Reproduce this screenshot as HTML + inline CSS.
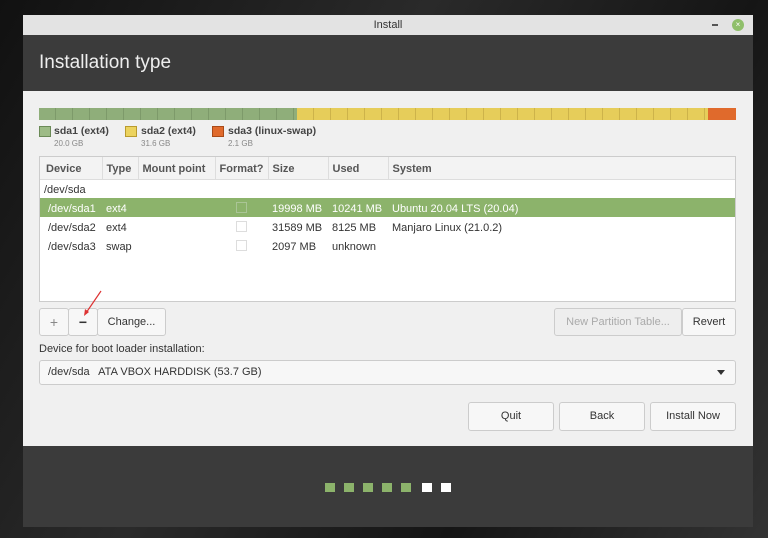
<!DOCTYPE html><html><head><style>
body{margin:0;width:768px;height:538px;overflow:hidden;background:#1c1c1c;font-family:"Liberation Sans",sans-serif;font-size:11px;color:#333;position:relative}
.a{position:absolute}
.btn{position:absolute;background:#f7f7f7;border:1px solid #ccc;border-radius:3px;text-align:center;box-sizing:border-box;color:#333}
table{table-layout:fixed}
td{padding:0 4px;height:19px;white-space:nowrap;overflow:hidden;box-sizing:border-box}
</style></head><body>
<div class="a" style="left:0;top:0;width:768px;height:538px;background:linear-gradient(120deg,#111 0%,#2a2a2a 40%,#151515 70%,#333 100%)"></div>
<div class="a" style="left:23px;top:15px;width:730px;height:512px;background:#f0f0f0">
 <div class="a" style="left:0;top:0;width:730px;height:20px;background:#e3e3e3;text-align:center;line-height:20px;font-size:11px;color:#333">Install</div>
 <div class="a" style="left:689px;top:9px;width:6px;height:2px;background:#555"></div>
 <div class="a" style="left:709px;top:4px;width:12px;height:12px;border-radius:50%;background:#8fbf6a;color:#fff;font-size:8px;line-height:12px;text-align:center">×</div>
 <div class="a" style="left:0;top:20px;width:730px;height:56px;background:#3b3b3b"></div>
 <div class="a" style="left:16px;top:37px;color:#eee;font-size:19px">Installation type</div>
 <div class="a" style="left:16px;top:93px;width:258px;height:12px;background:repeating-linear-gradient(90deg,#8fae7a 0 16px,#7d9a6a 16px 17px)"></div>
 <div class="a" style="left:274px;top:93px;width:411px;height:12px;background:repeating-linear-gradient(90deg,#e6cd5a 0 16px,#cdb34a 16px 17px)"></div>
 <div class="a" style="left:685px;top:93px;width:28px;height:12px;background:#e06a2c"></div>
 <div class="a" style="left:16px;top:111px;width:10px;height:9px;background:#9dbb86;border:1px solid #6b8a57"></div>
 <div class="a" style="left:31px;top:110px;font-weight:bold;color:#444;font-size:10.5px">sda1 (ext4)</div>
 <div class="a" style="left:31px;top:124px;color:#888;font-size:8px">20.0 GB</div>
 <div class="a" style="left:102px;top:111px;width:10px;height:9px;background:#ecd35e;border:1px solid #b99b2e"></div>
 <div class="a" style="left:118px;top:110px;font-weight:bold;color:#444;font-size:10.5px">sda2 (ext4)</div>
 <div class="a" style="left:118px;top:124px;color:#888;font-size:8px">31.6 GB</div>
 <div class="a" style="left:189px;top:111px;width:10px;height:9px;background:#e06a2c;border:1px solid #a94a18"></div>
 <div class="a" style="left:205px;top:110px;font-weight:bold;color:#444;font-size:10.5px">sda3 (linux-swap)</div>
 <div class="a" style="left:205px;top:124px;color:#888;font-size:8px">2.1 GB</div>
 <div class="a" style="left:16px;top:141px;width:697px;height:146px;background:#fff;border:1px solid #ccc;box-sizing:border-box"></div>
 <div class="a" style="left:17px;top:142px;width:695px;height:22px;background:#f3f3f3;border-bottom:1px solid #ddd"></div>
 <div class="a" style="left:17px;top:183px;width:695px;height:19px;background:#8cb36b"></div>
 <table class="a" style="left:17px;top:142px;width:695px;border-collapse:collapse;font-size:11px">
 <colgroup><col style="width:62px"><col style="width:36px"><col style="width:77px"><col style="width:53px"><col style="width:60px"><col style="width:60px"><col></colgroup>
 <tr style="height:23px;font-weight:bold;color:#555"><td style="padding-left:6px;border-right:1px solid #ddd">Device</td><td style="border-right:1px solid #ddd">Type</td><td style="border-right:1px solid #ddd">Mount point</td><td style="border-right:1px solid #ddd">Format?</td><td style="border-right:1px solid #ddd">Size</td><td style="border-right:1px solid #ddd">Used</td><td>System</td></tr>
 <tr><td style="padding-left:4px">/dev/sda</td><td></td><td></td><td></td><td></td><td></td><td></td></tr>
 <tr style="color:#fff"><td style="padding-left:8px">/dev/sda1</td><td>ext4</td><td></td><td style="text-align:center"><span style="display:inline-block;width:9px;height:9px;border:1px solid #aac596"></span></td><td>19998 MB</td><td>10241 MB</td><td>Ubuntu 20.04 LTS (20.04)</td></tr>
 <tr><td style="padding-left:8px">/dev/sda2</td><td>ext4</td><td></td><td style="text-align:center"><span style="display:inline-block;width:9px;height:9px;border:1px solid #ddd"></span></td><td>31589 MB</td><td>8125 MB</td><td>Manjaro Linux (21.0.2)</td></tr>
 <tr><td style="padding-left:8px">/dev/sda3</td><td>swap</td><td></td><td style="text-align:center"><span style="display:inline-block;width:9px;height:9px;border:1px solid #ddd"></span></td><td>2097 MB</td><td>unknown</td><td></td></tr>
 </table>
 <div class="btn" style="left:16px;top:293px;width:30px;height:28px;line-height:26px;color:#888;font-size:14px">+</div>
 <div class="btn" style="left:45px;top:293px;width:30px;height:28px;line-height:26px;font-weight:bold;font-size:14px">−</div>
 <div class="btn" style="left:74px;top:293px;width:69px;height:28px;line-height:26px">Change...</div>
 <svg class="a" style="left:56px;top:274px" width="30" height="30"><path d="M22 2 L7 24" stroke="#d33" stroke-width="1.2"/><path d="M5 27 L6 20 L10 23 Z" fill="#d33"/></svg>
 <div class="btn" style="left:531px;top:293px;width:128px;height:28px;line-height:26px;color:#aaa;background:#eee">New Partition Table...</div>
 <div class="btn" style="left:659px;top:293px;width:54px;height:28px;line-height:26px">Revert</div>
 <div class="a" style="left:16px;top:328px;color:#333">Device for boot loader installation:</div>
 <div class="btn" style="left:16px;top:345px;width:697px;height:25px;line-height:23px;text-align:left;padding-left:8px">/dev/sda &nbsp; ATA VBOX HARDDISK (53.7 GB)</div>
 <div class="a" style="left:694px;top:355px;border-left:4px solid transparent;border-right:4px solid transparent;border-top:5px solid #333"></div>
 <div class="btn" style="left:445px;top:387px;width:86px;height:29px;line-height:27px">Quit</div>
 <div class="btn" style="left:536px;top:387px;width:86px;height:29px;line-height:27px">Back</div>
 <div class="btn" style="left:627px;top:387px;width:86px;height:29px;line-height:27px">Install Now</div>
 <div class="a" style="left:0;top:431px;width:730px;height:81px;background:#3b3b3b"></div>
 <div class="a" style="left:302px;top:468px;width:10px;height:9px;background:#8cb36b;box-shadow:19px 0 #8cb36b,38px 0 #8cb36b,57px 0 #8cb36b,76px 0 #8cb36b,97px 0 #fff,116px 0 #fff"></div>
</div>
</body></html>
